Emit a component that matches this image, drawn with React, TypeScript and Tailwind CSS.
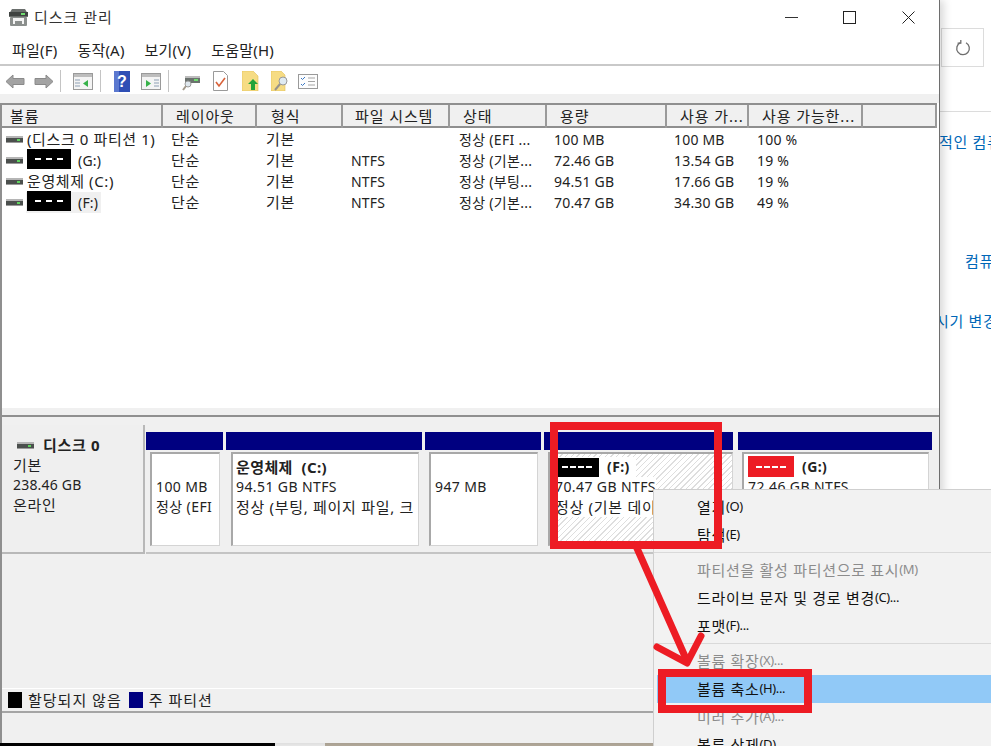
import React from "react";

const ROW_GRID = "grid grid-cols-[160px_94px_86px_107px_97px_120px_82px_114px_75px]";
const HEAD_GRID = "grid grid-cols-[161px_94px_86px_107px_97px_120px_82px_114px_74px]";

// hangul in the picture runs wider than the latin text beside it
const KO = "text-[15px] tracking-[0.7px]";

const COLUMNS = [
  { label: "볼륨", cls: "pl-[8px]" },
  { label: "레이아웃", cls: "pl-[13px]" },
  { label: "형식", cls: "pl-[14px]" },
  { label: "파일 시스템", cls: "pl-[12px]" },
  { label: "상태", cls: "pl-[13px]" },
  { label: "용량", cls: "pl-[13px]" },
  { label: "사용 가...", cls: "pl-[13px]" },
  { label: "사용 가능한...", cls: "pl-[13px]" },
  { label: "", cls: "" },
];

const ROWS = [
  { name: "(디스크 0 파티션 1)", hidden: false, fs: "", status: "정상 (EFI ...", size: "100 MB", free: "100 MB", pct: "100 %" },
  { name: "(G:)", hidden: true, fs: "NTFS", status: "정상 (기본...", size: "72.46 GB", free: "13.54 GB", pct: "19 %" },
  { name: "운영체제 (C:)", hidden: false, fs: "NTFS", status: "정상 (부팅...", size: "94.51 GB", free: "17.66 GB", pct: "19 %" },
  { name: "(F:)", hidden: true, selected: true, fs: "NTFS", status: "정상 (기본...", size: "70.47 GB", free: "34.30 GB", pct: "49 %" },
];

function DriveIcon() {
  return (
    <svg width="17" height="7" viewBox="0 0 17 7" className="shrink-0">
      <rect x="0" y="0" width="17" height="2" fill="#b5b5b5" />
      <rect x="0" y="2" width="17" height="4" fill="#4b4f4d" />
      <rect x="11" y="3" width="3" height="2" fill="#5fd35f" />
      <rect x="0" y="6" width="17" height="1" fill="#9a9a9a" />
    </svg>
  );
}

function AppIcon() {
  return (
    <svg width="19" height="19" viewBox="0 0 19 19">
      <path d="M3 1h13l3 5v3H0V6z" fill="#6a6e6c" />
      <rect x="0" y="4" width="19" height="4" fill="#3f4341" />
      <rect x="12" y="5" width="4" height="2" fill="#6fdc6f" />
      <rect x="1" y="9" width="17" height="9" rx="1" fill="#8b8f8d" />
      <rect x="4" y="10" width="11" height="6" fill="#f4f4f4" />
      <rect x="6" y="13" width="7" height="3" fill="#8b8f8d" />
    </svg>
  );
}

function Arrow({ flip }: { flip?: boolean }) {
  return (
    <svg width="20" height="15" viewBox="0 0 20 15" className={flip ? "-scale-x-100" : ""}>
      <path d="M1 7.5 8 1v3.5h11v6H8V14z" fill="#a3a3a3" stroke="#8a8a8a" />
    </svg>
  );
}

function PanelIcon({ flip }: { flip?: boolean }) {
  return (
    <svg width="20" height="17" viewBox="0 0 20 17">
      <rect x="0.5" y="0.5" width="19" height="16" fill="#f4f4f4" stroke="#9a9a9a" />
      <rect x="1" y="1" width="18" height="3" fill="#bdbdbd" />
      {flip ? (
        <>
          <path d="M5 7l5 3.5L5 14z" fill="#38b24a" />
          <path d="M13 7h5M13 10h5M13 13h5" stroke="#8ea0b5" />
        </>
      ) : (
        <>
          <path d="M2 7h5M2 10h5M2 13h5" stroke="#8ea0b5" />
          <path d="M15 7l-5 3.5 5 3.5z" fill="#38b24a" />
        </>
      )}
    </svg>
  );
}

function HelpIcon() {
  return (
    <svg width="16" height="21" viewBox="0 0 16 21">
      <rect width="16" height="21" fill="#2f4fb5" />
      <rect width="5" height="21" fill="#5b78cf" />
      <text x="8" y="16" textAnchor="middle" fontSize="16" fontWeight="700" fill="#fff" fontFamily="Liberation Sans">?</text>
    </svg>
  );
}

function DriveSearchIcon() {
  return (
    <svg width="19" height="20" viewBox="0 0 19 20">
      <path d="M3 6h15v6H3z" fill="#6b726e" />
      <path d="M3 5h15v2H3z" fill="#bdbdbd" />
      <rect x="12" y="8" width="4" height="2" fill="#6fdc6f" />
      <circle cx="6" cy="13" r="3" fill="#dfe8ee" stroke="#9a9a9a" />
      <path d="M4 15 1 19" stroke="#a39a8c" strokeWidth="2" />
    </svg>
  );
}

function CheckDocIcon() {
  return (
    <svg width="15" height="20" viewBox="0 0 15 20">
      <path d="M.5.5h10l4 4v15H.5z" fill="#fff" stroke="#9a9a9a" />
      <path d="M3 11l3 4 6-8" fill="none" stroke="#d9623a" strokeWidth="1.6" />
    </svg>
  );
}

function FolderUpIcon() {
  return (
    <svg width="17" height="20" viewBox="0 0 17 20">
      <path d="M0 0h11l5 5v15H0z" fill="#f6dc84" stroke="#e3c057" strokeWidth=".6" />
      <path d="M11 8l5 5h-3v6H9v-6H6z" fill="#22a33a" />
    </svg>
  );
}

function FolderFindIcon() {
  return (
    <svg width="18" height="20" viewBox="0 0 18 20">
      <path d="M0 0h10l4 4v16H0z" fill="#f6dc84" stroke="#e3c057" strokeWidth=".6" />
      <circle cx="12" cy="10" r="4" fill="#dfeaf2" stroke="#9a9a9a" />
      <path d="M9 13 4 19" stroke="#98938a" strokeWidth="2" />
    </svg>
  );
}

function ChecklistIcon() {
  return (
    <svg width="20" height="15" viewBox="0 0 20 15">
      <rect x=".5" y=".5" width="19" height="14" fill="#fdfdfd" stroke="#9a9a9a" />
      <path d="M3 4l1.5 1.5L7 3M3 10l1.5 1.5L7 9" fill="none" stroke="#3b78c4" />
      <path d="M10 4h7M10 7.5h7M10 11h7" stroke="#a5a5a5" />
    </svg>
  );
}

function Redacted({ cls, bar }: { cls: string; bar: string }) {
  return (
    <span className={`flex items-center justify-center shrink-0 ${cls}`}>
      <span className={`block border-t-2 border-dashed border-white ${bar}`} />
    </span>
  );
}

function VolumeRow({ row }: { row: (typeof ROWS)[number] }) {
  return (
    <div className={`${ROW_GRID} h-[21px] items-center`}>
      <div className="flex items-center pl-[4px] whitespace-nowrap">
        <DriveIcon />
        {row.hidden ? (
          <span className={`relative flex items-center h-[21px] ml-[3px] w-[75px] ${row.selected ? "bg-[#f0f0f0]" : ""}`}>
            <Redacted cls="absolute left-[1px] -top-[1px] h-[20px] w-[44px] bg-black" bar="w-[28px]" />
            <span className="ml-[52px]">{row.name}</span>
          </span>
        ) : (
          <span className="ml-[4px] text-[15px] tracking-[0.6px]">{row.name}</span>
        )}
      </div>
      <div className={`pl-[9px] ${KO}`}>단순</div>
      <div className={`pl-[10px] ${KO}`}>기본</div>
      <div className="pl-[9px]">{row.fs}</div>
      <div className="pl-[10px] whitespace-nowrap tracking-[0.3px]">{row.status}</div>
      <div className="pl-[8px]">{row.size}</div>
      <div className="pl-[8px]">{row.free}</div>
      <div className="pl-[9px]">{row.pct}</div>
      <div />
    </div>
  );
}

function Partition({ cls, bodyCls, children }: { cls: string; bodyCls: string; children: React.ReactNode }) {
  return (
    <div className={`flex flex-col ${cls}`}>
      <div className="h-[18px] bg-[#000080]" />
      <div className={`mt-[2px] h-[94px] overflow-hidden border-t-2 border-l-2 border-r border-b border-t-[#a8a8a8] border-l-[#a8a8a8] border-r-[#d4d4d4] border-b-[#d4d4d4] leading-[20px] tracking-[0.4px] whitespace-nowrap ${bodyCls}`}>
        {children}
      </div>
    </div>
  );
}

function MenuItem({ label, hint, disabled, active }: { label: string; hint: string; disabled?: boolean; active?: boolean }) {
  return (
    <div
      className={`h-[28px] ml-[3px] flex items-center pl-[40px] whitespace-nowrap ${KO} ${disabled ? "text-[#8c8c8c]" : "text-[#111]"} ${active ? "bg-[#91c9f7]" : ""}`}
    >
      <span>{label}</span>
      <span className="text-[13px] tracking-[-0.4px]">{hint}</span>
    </div>
  );
}

export default function App() {
  return (
    <div className="relative w-[991px] h-[746px] overflow-hidden bg-white flex flex-col text-[14px] tracking-[0.2px] text-[#222] font-['Noto_Sans','Noto_Sans_CJK_KR',sans-serif]">
      <div className="flex h-[743px]">
        {/* disk management window */}
        <div className="relative z-10 w-[940px] shrink-0 flex flex-col bg-white border-r border-[#6e6e6e] shadow-[4px_0_8px_rgba(0,0,0,0.15)]">
          <div className="h-[36px] flex items-center pl-[9px] pb-[2px]">
            <AppIcon />
            <span className="ml-[6px] text-[15px] tracking-[1px] text-[#333]">디스크 관리</span>
            <div className="ml-auto flex items-center mr-[1px]">
              <div className="w-[58px] flex justify-center">
                <svg width="13" height="13" viewBox="0 0 13 13"><path d="M0 6.5h13" stroke="#333" /></svg>
              </div>
              <div className="w-[59px] flex justify-center">
                <svg width="13" height="13" viewBox="0 0 13 13"><rect x=".5" y=".5" width="12" height="12" fill="none" stroke="#222" /></svg>
              </div>
              <div className="w-[59px] flex justify-center">
                <svg width="13" height="13" viewBox="0 0 13 13"><path d="M.5.5l12 12M12.5.5l-12 12" stroke="#222" /></svg>
              </div>
            </div>
          </div>

          <div className="h-[30px] flex items-center gap-[20px] pl-[12px] pt-[1px] border-b-2 border-[#c9c9c9] text-[15px]">
            <span>파일(F)</span>
            <span>동작(A)</span>
            <span>보기(V)</span>
            <span>도움말(H)</span>
          </div>

          <div className="h-[28px] flex items-center pl-[5px] pt-[2px]">
            <Arrow />
            <span className="ml-[9px]"><Arrow flip /></span>
            <span className="ml-[6px] w-px h-[22px] bg-[#c4c4c4]" />
            <span className="ml-[12px]"><PanelIcon /></span>
            <span className="ml-[7px] w-px h-[22px] bg-[#c4c4c4]" />
            <span className="ml-[13px]"><HelpIcon /></span>
            <span className="ml-[11px]"><PanelIcon flip /></span>
            <span className="ml-[7px] w-px h-[22px] bg-[#c4c4c4]" />
            <span className="ml-[13px]"><DriveSearchIcon /></span>
            <span className="ml-[12px]"><CheckDocIcon /></span>
            <span className="ml-[14px]"><FolderUpIcon /></span>
            <span className="ml-[12px]"><FolderFindIcon /></span>
            <span className="ml-[9px]"><ChecklistIcon /></span>
          </div>

          <div className="h-[9px] bg-[#f0f0f0]" />

          {/* volume list */}
          <div className="h-[305px] mr-[2px] bg-white border-l-2 border-[#8f8f8f]">
            <div className={`${HEAD_GRID} h-[25px] bg-[#f0f0f0] border-y-2 border-[#8f8f8f]`}>
              {COLUMNS.map((c, i) => (
                <div key={i} className={`flex items-center border-r-2 border-[#9a9a9a] whitespace-nowrap text-[15px] tracking-[0.9px] ${c.cls}`}>
                  {c.label}
                </div>
              ))}
            </div>
            <div>
              {ROWS.map((r) => (
                <VolumeRow key={r.name} row={r} />
              ))}
            </div>
          </div>

          {/* graphical view */}
          <div className="flex-1 flex flex-col bg-[#f0f0f0] border-l-2 border-[#8f8f8f]">
            <div className="h-[9px] border-b-2 border-[#8f8f8f]" />
            <div className="flex mt-[8px] h-[129px]">
              <div className="w-[143px] h-[129px] bg-[#efefef] border-r-2 border-b-2 border-[#b8b8b8] pl-[11px] pt-[10px] leading-[20px]">
                <div className="flex items-center">
                  <span className="ml-[4px]"><DriveIcon /></span>
                  <span className={`ml-[9px] font-bold ${KO}`}>디스크 0</span>
                </div>
                <div className={KO}>기본</div>
                <div>238.46 GB</div>
                <div className={KO}>온라인</div>
              </div>
              <div className="flex gap-[3px] pt-[7px] pr-[5px] h-[129px] ml-px border-b-2 border-[#c4c4c4]">
                <Partition cls="w-[77px]" bodyCls="ml-[4px] mr-[3px] bg-white pl-[4px] pt-[3px]">
                  <div className="h-[20px]" />
                  <div>100 MB</div>
                  <div>정상 (EFI</div>
                </Partition>
                <Partition cls="w-[196px]" bodyCls="ml-[5px] mr-[3px] bg-white pl-[3px] pt-[3px]">
                  <div className="font-bold whitespace-pre text-[15px]">운영체제  (C:)</div>
                  <div>94.51 GB NTFS</div>
                  <div className={KO}>정상 (부팅, 페이지 파일, 크</div>
                </Partition>
                <Partition cls="w-[116px]" bodyCls="ml-[4px] mr-[3px] bg-white pl-[4px] pt-[3px]">
                  <div className="h-[20px]" />
                  <div>947 MB</div>
                </Partition>
                <Partition
                  cls="w-[189px]"
                  bodyCls="ml-[4px] border-l-4 bg-[repeating-linear-gradient(135deg,#ffffff_0px,#ffffff_3px,#dedede_3px,#dedede_4px)] pt-[3px]"
                >
                  <div className="flex items-center h-[20px] w-fit bg-white pl-[3px] pr-[6px]">
                    <Redacted cls="h-[19px] w-[44px] bg-black" bar="w-[30px]" />
                    <span className="ml-[8px] font-bold">(F:)</span>
                  </div>
                  <div className="w-fit bg-white pl-[3px]">70.47 GB NTFS</div>
                  <div className={`w-fit bg-white pl-[3px] ${KO}`}>정상 (기본 데이터 파티션)</div>
                </Partition>
                <Partition cls="w-[194px] ml-[2px]" bodyCls="ml-[4px] mr-[3px] bg-white pl-[4px] pt-[2px]">
                  <div className="flex items-center h-[21px]">
                    <Redacted cls="h-[21px] w-[46px] bg-[#ed1c24]" bar="w-[30px]" />
                    <span className="ml-[8px] font-bold">(G:)</span>
                  </div>
                  <div>72.46 GB NTFS</div>
                </Partition>
              </div>
            </div>

            <div className="flex-1" />

            <div className="h-[25px] mb-[30px] flex items-center gap-[7px] pl-[6px] border-t border-white border-b-2 border-b-[#a5a5a5]">
              <span className="flex items-center gap-[6px]">
                <span className="block w-[14px] h-[16px] bg-black" />
                <span className="text-[15px] tracking-[1px]">할당되지 않음</span>
              </span>
              <span className="flex items-center gap-[6px]">
                <span className="block w-[14px] h-[16px] bg-[#000080]" />
                <span className="text-[15px] tracking-[1px]">주 파티션</span>
              </span>
            </div>
          </div>
        </div>

        {/* page behind the window */}
        <div className={`flex-1 min-w-0 flex flex-col text-[#0067b8] whitespace-nowrap ${KO}`}>
          <div className="mt-[28px] ml-[1px] w-[43px] h-[39px] border border-[#dcdcdc] flex items-center justify-center">
            <svg width="16" height="16" viewBox="0 0 16 16" fill="none" stroke="#6e6e6e" strokeWidth="1.3">
              <path d="M5.5 2.6A6.3 6.3 0 1 0 11 2.8" />
              <path d="M5.8 0v3.2H2.6" />
            </svg>
          </div>
          <div className="mt-[44px] h-px bg-[#dcdcdc]" />
          <div className="mt-[20px] -ml-[1px] h-[20px] leading-[20px]">적인 컴퓨터</div>
          <div className="mt-[99px] ml-[13px] h-[20px] leading-[20px] flex items-center">
            <span className="block w-[1px] h-[14px] bg-[#999999]" />
            <span className="ml-[12px]">컴퓨터</span>
          </div>
          <div className="mt-[40px] -ml-[5px] h-[20px] leading-[20px]">시기 변경</div>
        </div>
      </div>

      {/* strip of the window below */}
      <div className="flex h-[3px]">
        <div className="w-[275px] bg-black" />
        <div className="w-[50px] bg-[#f0f0f0]" />
        <div className="flex-1 bg-[#b7ad9e]" />
      </div>

      {/* context menu */}
      <div className="absolute z-20 left-[653px] top-[489px] w-[340px] h-[260px] bg-[#f2f2f2] border border-[#cfcfcf] pt-[3px]">
        <MenuItem label="열기" hint="(O)" />
        <MenuItem label="탐색" hint="(E)" />
        <div className="h-px bg-[#d9d9d9] my-[3px]" />
        <MenuItem label="파티션을 활성 파티션으로 표시" hint="(M)" disabled />
        <MenuItem label="드라이브 문자 및 경로 변경" hint="(C)..." />
        <MenuItem label="포맷" hint="(F)..." />
        <div className="h-px bg-[#d9d9d9] my-[3px]" />
        <MenuItem label="볼륨 확장" hint="(X)..." disabled />
        <MenuItem label="볼륨 축소" hint="(H)..." active />
        <MenuItem label="미러 추가" hint="(A)..." disabled />
        <MenuItem label="볼륨 삭제" hint="(D)..." />
      </div>

      {/* red annotations drawn over the screenshot */}
      <div className="absolute z-30 left-[550px] top-[422px] w-[172px] h-[127px] border-8 border-[#ed1c24]" />
      <div className="absolute z-30 left-[658px] top-[669px] w-[154px] h-[44px] border-8 border-[#ed1c24]" />
      <svg className="absolute z-30 left-[620px] top-[540px]" width="100" height="130" viewBox="0 0 100 130" fill="none" stroke="#ed1c24" strokeWidth="7" strokeLinecap="round" strokeLinejoin="round">
        <path d="M16 6 67 121" />
        <path d="M37 107 67 123 81 96" />
      </svg>
    </div>
  );
}
